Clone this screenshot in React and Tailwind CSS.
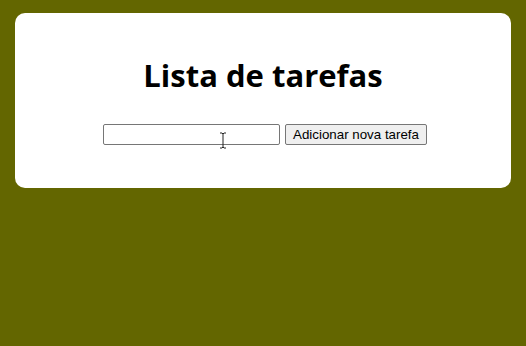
export default function App() {
  return (
    <div className="min-h-screen bg-[#636600] pt-[13px] px-[15px]">
      <div className="relative bg-white rounded-[10px] pt-[41px] pb-[43px] flex flex-col items-center">
        <h1 className="text-[31px] leading-[43px] font-bold text-black font-['Open_Sans',sans-serif] mb-[27px]">
          Lista de tarefas
        </h1>
        <div className="ml-[4px] flex items-center gap-[5px] font-['Liberation_Sans',Arial,sans-serif]">
          <input
            type="text"
            className="w-[177px] h-[21px] border border-[#767676] rounded-[2px] bg-white px-[2px] text-[13px] outline-none"
          />
          <button className="h-[21px] px-[7px] border border-[#767676] rounded-[2px] bg-[#efefef] text-[13.33px] text-black leading-none">
            Adicionar nova tarefa
          </button>
        </div>
        {/* mouse cursor over input */}
        <svg className="absolute left-[203px] top-[119px]" width="10" height="17" viewBox="0 0 10 17">
          <path d="M2 1h2l1 1 1-1h2M5 2v13M2 16h2l1-1 1 1h2" fill="none" stroke="#222" strokeWidth="1" />
        </svg>
      </div>
    </div>
  )
}
